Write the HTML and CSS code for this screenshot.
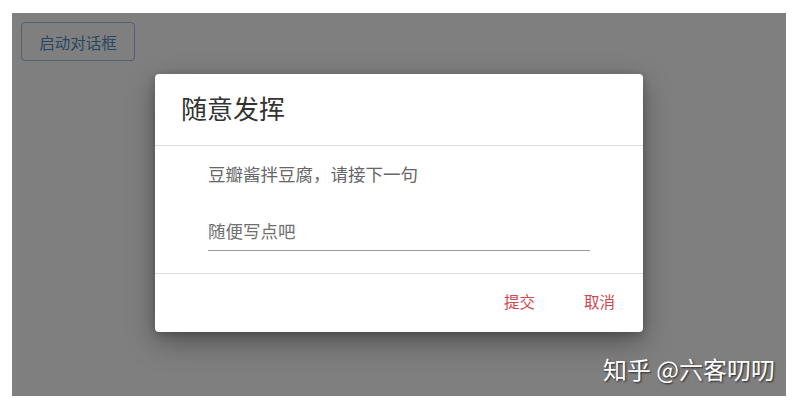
FILE: index.html
```html
<!DOCTYPE html>
<html lang="zh-CN">
<head>
<meta charset="utf-8">
<title>对话框</title>
<link rel="stylesheet" href="styles.css">
</head>
<body>
<div class="stage">
  <button class="launch">启动对话框</button>
  <div class="dialog">
    <div class="dialog-header">
      <h2 class="dialog-title">随意发挥</h2>
    </div>
    <div class="dialog-body">
      <p class="prompt">豆瓣酱拌豆腐，请接下一句</p>
      <div class="field">
        <input class="field-input" type="text" placeholder="随便写点吧">
      </div>
    </div>
    <div class="dialog-footer">
      <button class="action">提交</button>
      <button class="action">取消</button>
    </div>
  </div>
  <div class="watermark">知乎 @六客叨叨</div>
</div>
</body>
</html>
```
FILE: styles.css
```css
html, body {
  margin: 0;
  padding: 0;
  background: #ffffff;
}
body {
  font-family: "Noto Sans CJK SC", "Noto Sans", sans-serif;
}
.stage {
  position: relative;
  margin: 13px 11px 0 12px;
  height: 383px;
  background: #7f7f7f;
  padding: 9px;
  box-sizing: border-box;
}
.launch {
  display: block;
  width: 114px;
  height: 39px;
  margin: 0;
  padding: 0;
  border: 1px solid #52606e;
  border-radius: 4px;
  background: transparent;
  color: #284763;
  font-family: inherit;
  font-size: 15.5px;
  cursor: pointer;
}
.dialog {
  position: absolute;
  left: 143px;
  top: 61px;
  width: 488px;
  background: #ffffff;
  border-radius: 4px;
  box-shadow: 0 10px 28px rgba(0, 0, 0, 0.35), 0 2px 8px rgba(0, 0, 0, 0.2);
}
.dialog-header {
  height: 72px;
  display: flex;
  align-items: center;
  padding: 0 26px 4px;
  box-sizing: border-box;
  border-bottom: 1px solid #dcdcdc;
}
.dialog-title {
  margin: 0;
  font-size: 26px;
  font-weight: 400;
  line-height: 30px;
  color: #333333;
}
.dialog-body {
  padding: 16px 53px 22px;
  border-bottom: 1px solid #dcdcdc;
}
.prompt {
  margin: 0 0 26px;
  font-size: 17.5px;
  line-height: 24px;
  color: #666666;
}
.field {
  border-bottom: 1px solid #9a9a9a;
}
.field-input {
  display: block;
  width: 100%;
  height: 38px;
  margin: 0;
  padding: 0 0 2px;
  border: 0;
  outline: none;
  background: transparent;
  font-family: inherit;
  font-size: 17.5px;
  color: #333;
  box-sizing: border-box;
}
.field-input::placeholder {
  color: #707070;
}
.dialog-footer {
  height: 58px;
  display: flex;
  justify-content: flex-end;
  align-items: center;
  gap: 25px;
  padding: 0 16px 4px;
  box-sizing: border-box;
}
.action {
  border: 0;
  background: transparent;
  padding: 0 12px;
  font-family: inherit;
  font-size: 15.5px;
  line-height: 22px;
  color: #d2454d;
  cursor: pointer;
}
.watermark {
  position: absolute;
  right: 11px;
  bottom: 13px;
  font-size: 24px;
  line-height: 28px;
  color: #ffffff;
  text-shadow: 1px 1px 2px rgba(0, 0, 0, 0.7);
}
```
